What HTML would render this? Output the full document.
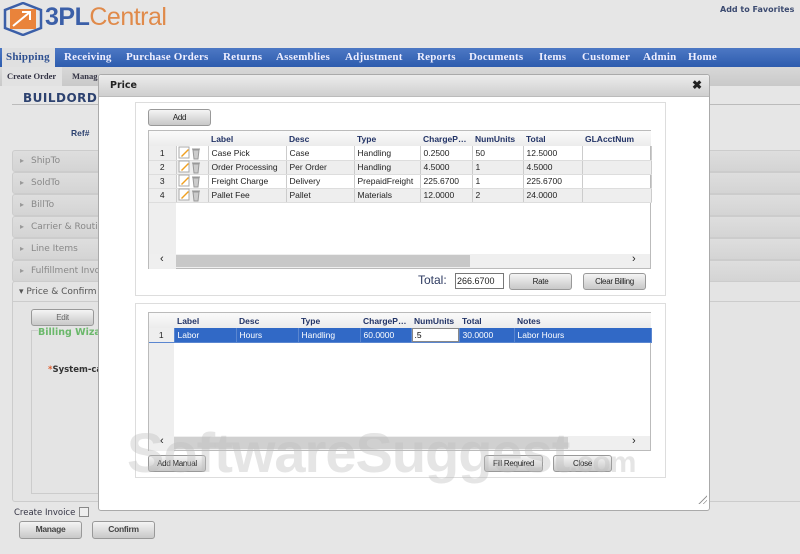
<!DOCTYPE html>
<html><head><meta charset="utf-8"><style>
*{margin:0;padding:0;box-sizing:border-box}
body{width:800px;height:554px;overflow:hidden;background:#e6e6e6;font-family:"Liberation Sans",sans-serif;font-size:9px;color:#222;position:relative}
.a{position:absolute}
.nav span{position:absolute;top:3px;color:#eef;font-weight:bold;font-size:11px;font-family:"Liberation Serif",serif;letter-spacing:.2px}
.acc{position:absolute;left:12px;width:800px;height:22px;background:linear-gradient(#dedede,#d4d4d4);border:1px solid #ccc;border-radius:3px;color:#888;font-size:9px;padding:5px 0 0 18px;font-family:"DejaVu Sans",sans-serif}
.acc:before{content:"▸";position:absolute;left:7px;top:5px;font-size:8px;color:#999}
.btn{position:absolute;height:17px;border:1px solid #999;border-radius:3px;background:linear-gradient(#f4f4f4,#c8c8c8);font-size:8px;text-align:center;line-height:15px;color:#222;font-family:"Liberation Sans",sans-serif;letter-spacing:-.3px}
table{border-collapse:collapse;position:absolute;font-size:8.5px;table-layout:fixed;font-family:"Liberation Sans",sans-serif}
td{height:14px;border-right:1px solid #ccc;border-bottom:1px solid #ddd;padding:0 3px;white-space:nowrap;overflow:hidden}
th{height:15px;text-align:left;vertical-align:middle;padding:0 3px;color:#223366;font-weight:bold;background:linear-gradient(#fafafa,#ececec);font-size:8.5px;white-space:nowrap;overflow:hidden}
.rn{background:#eee;text-align:center}
.alt td{background:#eee}
.sel td{background:#3169c6;color:#fff;border-color:#5a86d0}
</style></head><body>
<svg class="a" style="left:3px;top:2px" width="40" height="34" viewBox="0 0 40 34"><path d="M20 1 L38 8 L38 26 L20 33 L2 26 L2 8Z" fill="none" stroke="#3b5fa8" stroke-width="2.5"/><rect x="7" y="7" width="26" height="20" fill="#e9833b"/><path d="M10 24 L27 10 M19 10 L27 10 L27 18" stroke="#fff" stroke-width="2" fill="none"/></svg>
<div class="a" style="left:45px;top:3px;font-family:'Liberation Sans',sans-serif;font-size:25px;letter-spacing:-.5px"><span style="color:#3b5fa8;font-weight:bold">3PL</span><span style="color:#e08a4a">Central</span></div>
<div class="a" style="left:720px;top:5px;font-size:8px;font-weight:bold;color:#3b4a70;font-family:'DejaVu Sans',sans-serif">Add to Favorites</div>
<div class="a nav" style="left:0;top:48px;width:800px;height:19px;background:linear-gradient(#4d78c4,#2d5cae)">
<div class="a" style="left:2px;top:0;width:53px;height:19px;background:#e0e0e0"></div>
<span style="left:6px;color:#2d4f90">Shipping</span><span style="left:64px">Receiving</span><span style="left:126px">Purchase Orders</span><span style="left:223px">Returns</span><span style="left:276px">Assemblies</span><span style="left:345px">Adjustment</span><span style="left:417px">Reports</span><span style="left:469px">Documents</span><span style="left:539px">Items</span><span style="left:582px">Customer</span><span style="left:643px">Admin</span><span style="left:688px">Home</span></div>
<div class="a" style="left:0;top:67px;width:800px;height:19px;background:linear-gradient(#d8d8d8,#c9c9c9)"></div>
<div class="a" style="left:2px;top:67px;width:60px;height:19px;background:#e2e2e2"></div>
<div class="a" style="left:7px;top:71px;font-size:8.5px;font-weight:bold;color:#334;font-family:'Liberation Serif',serif">Create Order</div>
<div class="a" style="left:72px;top:71px;font-size:8.5px;font-weight:bold;color:#334;font-family:'Liberation Serif',serif">Manag</div>
<div class="a" style="left:23px;top:91px;font-size:12px;font-weight:bold;color:#2d4270;font-family:'DejaVu Sans',sans-serif;letter-spacing:.5px">BUILDORDER</div>
<div class="a" style="left:12px;top:104px;width:790px;border-top:1px solid #bbb"></div>
<div class="a" style="left:71px;top:128px;font-size:8.5px;font-weight:bold;color:#2d4270">Ref#</div>
<div class="acc" style="top:150px">ShipTo</div>
<div class="acc" style="top:172px">SoldTo</div>
<div class="acc" style="top:194px">BillTo</div>
<div class="acc" style="top:216px">Carrier &amp; Routing</div>
<div class="acc" style="top:238px">Line Items</div>
<div class="acc" style="top:260px">Fulfillment Invoice</div>
<div class="a" style="left:12px;top:281px;width:800px;height:221px;border:1px solid #ccc;border-radius:3px;background:#e4e4e4"></div>
<div class="a" style="left:19px;top:287px;font-size:9px;color:#555;font-family:'DejaVu Sans',sans-serif">▾ Price &amp; Confirm</div>
<div class="a" style="left:12px;top:301px;width:800px;border-top:1px solid #ccc"></div>
<div class="btn" style="left:31px;top:309px;width:63px;height:17px;color:#666">Edit</div>
<div class="a" style="left:31px;top:330px;width:200px;height:164px;border:1px solid #ccc"></div>
<div class="a" style="left:38px;top:327px;font-size:9.5px;font-weight:bold;color:#6bb86b;background:#e4e4e4;font-family:'DejaVu Sans',sans-serif">Billing Wizard</div>
<div class="a" style="left:48px;top:365px;font-size:8.5px;font-weight:bold;color:#333;font-family:'DejaVu Sans',sans-serif"><span style="color:#e06030">*</span>System-calc</div>
<div class="a" style="left:14px;top:508px;font-size:8.5px;color:#334;font-family:'DejaVu Sans',sans-serif">Create Invoice</div>
<div class="a" style="left:79px;top:507px;width:10px;height:10px;border:1px solid #888;background:#eee"></div>
<div class="btn" style="left:19px;top:521px;width:63px;height:18px;font-weight:bold;color:#444;font-size:8.5px">Manage</div>
<div class="btn" style="left:92px;top:521px;width:63px;height:18px;font-weight:bold;color:#444;font-size:8.5px">Confirm</div>

<div class="a" style="left:98px;top:74px;width:612px;height:437px;background:#fff;border:1px solid #aaa;border-radius:3px"></div>
<div class="a" style="left:99px;top:75px;width:610px;height:22px;background:linear-gradient(#ececec,#cfcfcf);border-bottom:1px solid #bbb;border-radius:3px 3px 0 0"></div>
<div class="a" style="left:110px;top:80px;font-size:9.5px;font-weight:bold;color:#222;font-family:'DejaVu Sans',sans-serif">Price</div>
<div class="a" style="left:692px;top:78px;font-size:12px;font-weight:bold;color:#222">✖</div>
<div class="a" style="left:697px;top:494px;width:10px;height:10px;background:repeating-linear-gradient(135deg,transparent 0 2px,#999 2px 3px);clip-path:polygon(100% 0,100% 100%,0 100%)"></div>

<div class="a" style="left:135px;top:102px;width:531px;height:194px;border:1px solid #ddd"></div>
<div class="btn" style="left:148px;top:109px;width:63px;height:17px">Add</div>
<div class="a" style="left:148px;top:130px;width:503px;height:139px;border:1px solid #bbb;background:#fff"></div>
<div class="a" style="left:149px;top:131px;width:27px;height:138px;background:#eee"></div>
<table style="left:149px;top:131px;width:502px">
<colgroup><col style="width:27px"><col style="width:32px"><col style="width:78px"><col style="width:68px"><col style="width:66px"><col style="width:52px"><col style="width:51px"><col style="width:59px"><col style="width:69px"></colgroup>
<tr><th></th><th></th><th>Label</th><th>Desc</th><th>Type</th><th>ChargeP…</th><th>NumUnits</th><th>Total</th><th>GLAcctNum</th></tr>
<tr><td class="rn">1</td><td></td><td>Case Pick</td><td>Case</td><td>Handling</td><td>0.2500</td><td>50</td><td>12.5000</td><td></td></tr>
<tr class="alt"><td class="rn">2</td><td></td><td>Order Processing</td><td>Per Order</td><td>Handling</td><td>4.5000</td><td>1</td><td>4.5000</td><td></td></tr>
<tr><td class="rn">3</td><td></td><td>Freight Charge</td><td>Delivery</td><td>PrepaidFreight</td><td>225.6700</td><td>1</td><td>225.6700</td><td></td></tr>
<tr class="alt"><td class="rn">4</td><td></td><td>Pallet Fee</td><td>Pallet</td><td>Materials</td><td>12.0000</td><td>2</td><td>24.0000</td><td></td></tr>
</table>
<svg class="a" style="left:178px;top:146px" width="24" height="56" viewBox="0 0 24 56">
<g id="ic"><rect x="1" y="1" width="10" height="11" fill="#fff" stroke="#aaa"/><path d="M3 10 L10 3 L11 4 L4 11Z" fill="#f0a020"/><path d="M14 3h8M15 4h6l-1 9h-4z" stroke="#999" fill="#ccc"/></g>
<use href="#ic" y="14"/><use href="#ic" y="28"/><use href="#ic" y="42"/></svg>
<div class="a" style="left:149px;top:254px;width:501px;height:14px;background:#efefef"></div>
<div class="a" style="left:176px;top:255px;width:294px;height:12px;background:#c8c8c8"></div>
<div class="a" style="left:160px;top:253px;font-size:11px">‹</div><div class="a" style="left:632px;top:253px;font-size:11px">›</div>
<div class="a" style="left:418px;top:273px;font-size:12px;color:#2d3a60">Total:</div>
<div class="a" style="left:455px;top:273px;width:49px;height:16px;border:1px solid #777;font-size:9px;padding:2px 1px">266.6700</div>
<div class="btn" style="left:509px;top:273px;width:63px;height:17px">Rate</div>
<div class="btn" style="left:583px;top:273px;width:63px;height:17px">Clear Billing</div>

<div class="a" style="left:135px;top:303px;width:531px;height:175px;border:1px solid #ddd"></div>
<div class="a" style="left:148px;top:312px;width:503px;height:139px;border:1px solid #bbb;background:#fff"></div>
<div class="a" style="left:149px;top:313px;width:25px;height:138px;background:#eee"></div>
<table style="left:149px;top:313px;width:502px">
<colgroup><col style="width:25px"><col style="width:62px"><col style="width:62px"><col style="width:62px"><col style="width:51px"><col style="width:48px"><col style="width:55px"><col style="width:137px"></colgroup>
<tr><th></th><th>Label</th><th>Desc</th><th>Type</th><th>ChargeP…</th><th>NumUnits</th><th>Total</th><th>Notes</th></tr>
<tr class="sel"><td class="rn" style="background:#eee;color:#222">1</td><td>Labor</td><td>Hours</td><td>Handling</td><td>60.0000</td><td style="background:#fff;color:#000;box-shadow:inset 0 0 0 1px #888">.5</td><td>30.0000</td><td>Labor Hours</td></tr>
</table>
<div class="a" style="left:149px;top:436px;width:501px;height:14px;background:#efefef"></div>
<div class="a" style="left:174px;top:437px;width:394px;height:12px;background:#d0d0d0"></div>
<div class="a" style="left:160px;top:435px;font-size:11px">‹</div><div class="a" style="left:632px;top:435px;font-size:11px">›</div>
<div class="btn" style="left:148px;top:455px;width:58px;height:17px">Add Manual</div>
<div class="btn" style="left:484px;top:455px;width:59px;height:17px">Fill Required</div>
<div class="btn" style="left:553px;top:455px;width:59px;height:17px">Close</div>
<div class="a" style="left:127px;top:420px;font-family:'Liberation Sans',sans-serif;font-weight:bold;font-size:56px;color:rgba(190,190,190,.4);letter-spacing:-1px;white-space:nowrap">SoftwareSuggest<span style="font-size:30px">.com</span></div>
</body></html>
